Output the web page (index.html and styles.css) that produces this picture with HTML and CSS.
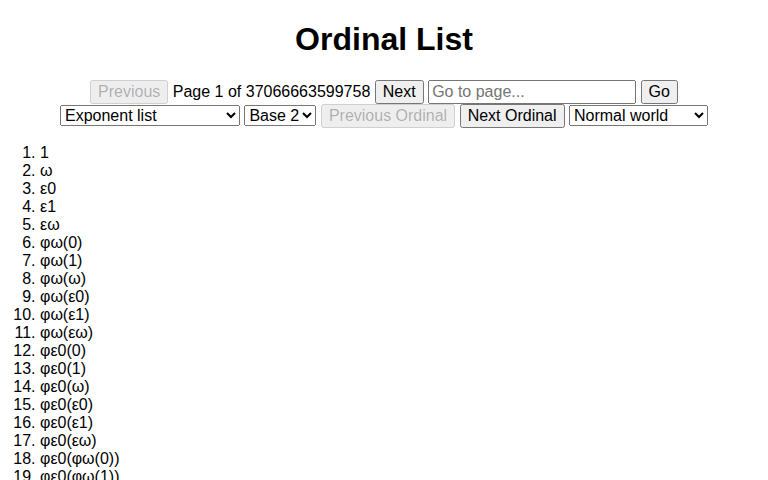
FILE: index.html
```html
<!DOCTYPE html>
<html>
<head>
<meta charset="utf-8">
<link rel="stylesheet" href="styles.css">
</head>
<body>
<h1 class="title">Ordinal List</h1>
<div class="controls">
  <div class="row">
    <button class="btn" disabled>Previous</button>
    <span class="page">Page 1 of 37066663599758</span>
    <button class="btn">Next</button>
    <input class="goto" type="text" placeholder="Go to page...">
    <button class="btn">Go</button>
  </div>
  <div class="row">
    <select class="sel sel-list"><option>Exponent list</option></select>
    <select class="sel sel-base"><option>Base 2</option></select>
    <button class="btn" disabled>Previous Ordinal</button>
    <button class="btn">Next Ordinal</button>
    <select class="sel sel-world"><option>Normal world</option></select>
  </div>
</div>
<ol class="ordinals">
  <li>1</li>
  <li>ω</li>
  <li>ε0</li>
  <li>ε1</li>
  <li>εω</li>
  <li>φω(0)</li>
  <li>φω(1)</li>
  <li>φω(ω)</li>
  <li>φω(ε0)</li>
  <li>φω(ε1)</li>
  <li>φω(εω)</li>
  <li>φε0(0)</li>
  <li>φε0(1)</li>
  <li>φε0(ω)</li>
  <li>φε0(ε0)</li>
  <li>φε0(ε1)</li>
  <li>φε0(εω)</li>
  <li>φε0(φω(0))</li>
  <li>φε0(φω(1))</li>
  <li>φε0(φω(ω))</li>
</ol>
</body>
</html>
```
FILE: styles.css
```css
body {
  margin: 0;
  font-family: "Liberation Sans", Arial, sans-serif;
  font-size: 16px;
  color: #000;
  background: #fff;
}
.title {
  text-align: center;
}
.controls {
  text-align: center;
}
.btn, .sel, .goto {
  font-family: "Liberation Sans", Arial, sans-serif;
  font-size: 16px;
}
.sel-list { width: 180px; }
.sel-base { width: 72px; }
.sel-world { width: 139px; }
.goto { width: 200px; }
```
